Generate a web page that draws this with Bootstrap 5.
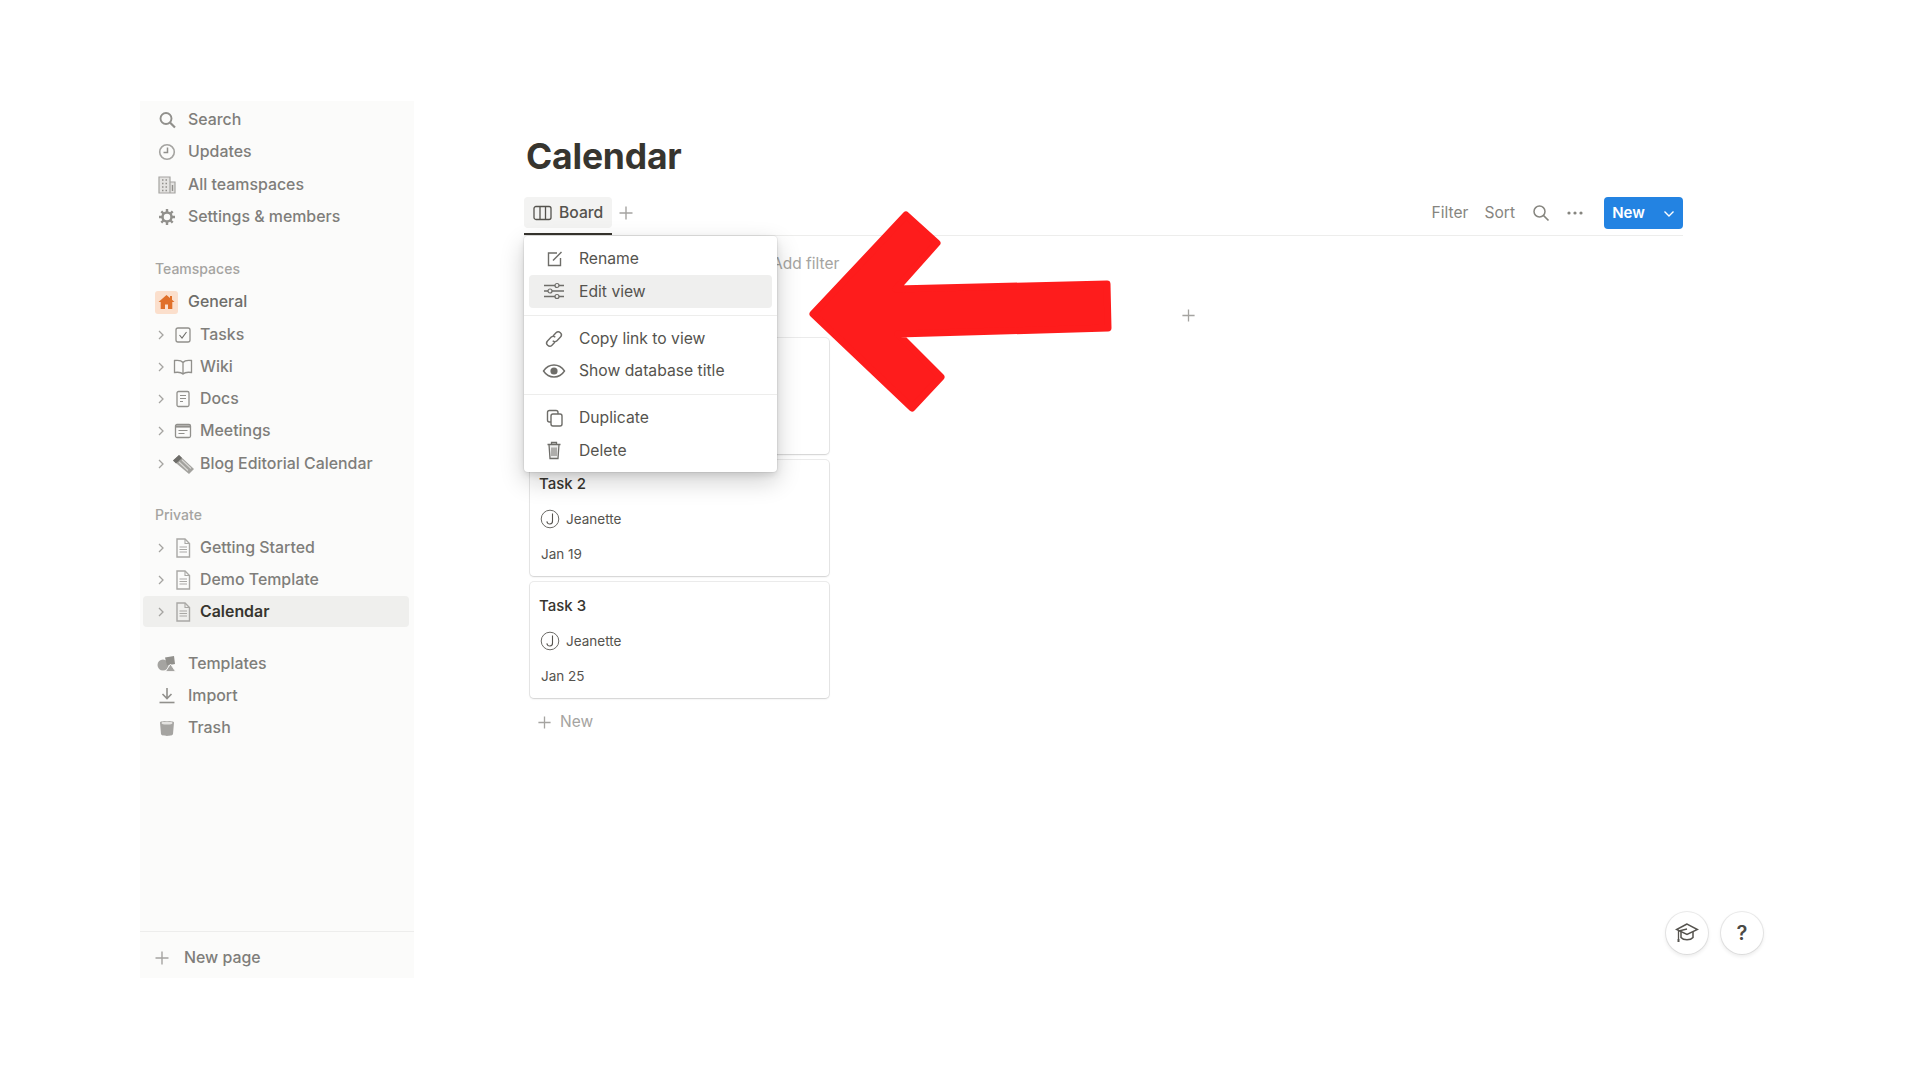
<!doctype html>
<html lang="en">
<head>
  <meta charset="utf-8">
  <title>Calendar</title>
  <link href="https://cdn.jsdelivr.net/npm/bootstrap@5.3.3/dist/css/bootstrap.min.css" rel="stylesheet">
  <style>
    body { background: #fff; font-family: Inter, "Liberation Sans", sans-serif; color: #37352f; overflow: hidden; }
    .app-frame { width: 1543px; height: 877px; margin: 101px 0 0 140px; position: relative; }
    .side-panel { width: 274px; flex: none; background: #fbfbfa; padding-top: 3px; }
    .side-row { height: 32.25px; padding-left: 15px; font-size: 15.9px; font-weight: 500; color: #7f7e7a; white-space: nowrap; }
    .side-row .ico { width: 24px; height: 20px; margin-right: 9px; flex: none; }
    .side-row.sub { padding-left: 15px; }
    .side-row.sub .chev { width: 12px; height: 12px; flex: none; margin-right: 4px; }
    .side-row.sub .ico { width: 24px; margin-right: 5px; margin-left: 0; }
    .side-row.current { margin: 0 5px 0 3px; padding-left: 12px; background: #efefed; border-radius: 4px; color: #37352f; font-weight: 600; height: 31px; }
    .side-head { height: 34px; margin-top: 18.5px; padding-left: 15px; font-size: 14px; font-weight: 500; color: #a5a4a1; display: flex; align-items: center; }
    .home-box { width: 23px; height: 23px; background: #fbdfcc; border-radius: 3px; margin-right: 10px; flex: none; }
    .side-gap { margin-top: 20.5px; }
    .side-foot { margin-top: auto; border-top: 1px solid #ededec; height: 47px; padding: 6px 0 0 14px; font-size: 15.9px; font-weight: 500; color: #7f7e7a; }
    .main-area { padding-left: 110px; }
    .page-title { font-size: 35.5px; line-height: 46px; font-weight: 700; margin: 33px 0 17px 2px; color: #37352f; letter-spacing: -.2px; }
    .view-bar { height: 39px; border-bottom: 1px solid #ededec; align-items: flex-start; }
    .view-tab { width: 88px; height: 31px; background: #f3f3f2; border-radius: 4px; font-size: 15.7px; font-weight: 500; color: #55534e; padding: 1px 0 0 9px; position: relative; }
    .view-tab svg { margin-right: 2px !important; }
    .view-tab::after { content: ""; position: absolute; left: 0; right: 0; top: 36px; height: 2px; background: #37352f; }
    .tab-add { margin: 8px 0 0 6px; }
    .bar-link { font-size: 15.6px; font-weight: 400; color: #86857f; }
    .new-split .btn { background: #2383e2; border: 0; color: #fff; height: 32px; font-size: 15px; font-weight: 600; padding: 0; border-radius: 4px; }
    .new-split .btn:first-child { width: 52px; border-right: 1px solid #1c74cb; padding-right: 2px; }
    .new-split .btn:last-child { width: 28px; }
    .filter-row { height: 28px; margin-top: 14px; padding-left: 248px; font-size: 15.5px; color: #a5a4a1; line-height: 28px; }
    .board-wrap { margin-left: 6px; }
    .col-lane { width: 299px; flex: none; }
    .add-lane { margin: 0 0 0 352px; }
    .task-box { height: 116px; margin-bottom: 6px; border: 0; border-radius: 4px; box-shadow: 0 0 0 1px rgba(15,15,15,.08), 0 1px 2px rgba(15,15,15,.12); padding: 14px 9px 0; }
    .task-name { font-size: 15px; font-weight: 500; line-height: 20px; color: #37352f; }
    .task-who { font-size: 13.5px; color: #55534e; margin-top: 15px; height: 20px; padding-left: 1px; }
    .task-who svg { margin-right: 6px !important; }
    .task-when { font-size: 13.5px; color: #55534e; margin-top: 15px; line-height: 20px; padding-left: 2px; }
    .lane-new { font-size: 15.5px; color: #a5a4a1; margin-top: 12px; padding-left: 7px; height: 24px; }
    .lane-new svg { margin-right: 4px !important; }
    .view-menu { position: absolute; left: 384px; top: 135px; width: 253px; height: 236px; padding: 7px 0 0; border: 0; border-radius: 4px; box-shadow: 0 0 0 1px rgba(15,15,15,.05), 0 3px 6px rgba(15,15,15,.1), 0 9px 24px rgba(15,15,15,.2); display: block; z-index: 3; }
    .view-menu .dropdown-item { height: 32.25px; padding: 0 0 0 13px; margin: 0 5px; width: auto; font-size: 15.7px; color: #55534e; display: flex; align-items: center; border-radius: 4px; }
    .view-menu .dropdown-item svg { width: 24px; height: 20px; margin-right: 13px; flex: none; }
    .view-menu .dropdown-item.picked { background: #efefee; }
    .view-menu .dropdown-divider { margin: 7px 0; border-color: #ededec; opacity: 1; }
    .red-arrow { position: absolute; left: 0; top: 0; width: 1920px; height: 1080px; z-index: 4; pointer-events: none; }
    .help-dot { position: absolute; top: 912px; width: 42px; height: 42px; background: #fff; border-radius: 50%; box-shadow: 0 0 0 1px rgba(15,15,15,.08), 0 2px 4px rgba(15,15,15,.1); color: #4b4a46; font-size: 20px; font-weight: 600; }
    .help-dot.learn { left: 1666px; }
    .help-dot.ask { left: 1721px; }
  </style>
</head>
<body>
  <svg width="0" height="0" class="position-absolute">
    <symbol id="i-chev" viewBox="0 0 12 12"><path d="M4 2l4 4-4 4" fill="none" stroke="#a5a4a1" stroke-width="1.3"/></symbol>
    <symbol id="i-doc" viewBox="0 0 24 20"><path d="M6 1h8l4.500 4.500v13.500H6z" fill="none" stroke="#a9a8a5" stroke-width="1.400"/><path d="M14 1v4.500h4.500M8.500 9h7.500M8.500 11.500h7.500M8.500 14h7.500" fill="none" stroke="#a9a8a5" stroke-width="1.100"/></symbol>
    <symbol id="i-plus" viewBox="0 0 16 16"><path d="M8 1.500v13M1.500 8h13" fill="none" stroke="#a5a4a1" stroke-width="1.400"/></symbol>
    <symbol id="i-avatar" viewBox="0 0 20 20"><circle cx="10" cy="10" r="8.800" fill="none" stroke="#6b6a66" stroke-width="1"/><path d="M12.500 4.500v7.500a2.800 2.800 0 0 1-5.600 .4" fill="none" stroke="#55534e" stroke-width="1.100"/></symbol>
  </svg>

  <div class="app-frame d-flex">
    <aside class="side-panel d-flex flex-column">
      <div class="side-row d-flex align-items-center"><svg class="ico" viewBox="0 0 24 20"><circle cx="11" cy="8.500" r="5.500" fill="none" stroke="#91908c" stroke-width="1.900"/><path d="M15 12.500l5 5" stroke="#91908c" stroke-width="2.200"/></svg>Search</div>
      <div class="side-row d-flex align-items-center"><svg class="ico" viewBox="0 0 24 20"><circle cx="12" cy="10" r="7.300" fill="none" stroke="#a5a4a1" stroke-width="1.600"/><path d="M12.500 5.500v5H8.500" fill="none" stroke="#91908c" stroke-width="1.500"/></svg>Updates</div>
      <div class="side-row d-flex align-items-center"><svg class="ico" viewBox="0 0 24 20"><path d="M4 2h11v16H4zM15 7h5v11h-5z" fill="#e4e3e1" stroke="#a5a4a1" stroke-width="1.200"/><path d="M7 5h1.500M10.500 5H12M7 8.500h1.500M10.500 8.500H12M7 12h1.500M10.500 12H12M7 15.500h1.500M10.500 15.500H12M17.500 10v6" stroke="#91908c" stroke-width="1.400"/></svg>All teamspaces</div>
      <div class="side-row d-flex align-items-center"><svg class="ico" viewBox="0 0 24 20"><circle cx="12" cy="10" r="4.500" fill="none" stroke="#91908c" stroke-width="2.500"/><path d="M12 2v3M12 15v3M4 10h3M17 10h3M6.300 4.300l2.200 2.200M15.500 13.500l2.200 2.200M17.700 4.300l-2.200 2.200M8.500 13.500l-2.200 2.200" stroke="#91908c" stroke-width="2.400"/></svg>Settings &amp; members</div>

      <div class="side-head">Teamspaces</div>
      <div class="side-row d-flex align-items-center" style="height:33px"><span class="home-box d-flex align-items-center justify-content-center"><svg width="17" height="16" viewBox="0 0 17 16"><path d="M8.500 1L0.500 8h2.200v7h4.300v-4.500h3V15h4.300V8h2.200l-2.500-2.200V2h-2v2z" fill="#e0702a"/></svg></span><span style="color:#6e6d69">General</span></div>
      <div class="side-row sub d-flex align-items-center"><svg class="chev"><use href="#i-chev"/></svg><svg class="ico" viewBox="0 0 24 20"><rect x="5" y="3" width="14" height="14" rx="2" fill="none" stroke="#91908c" stroke-width="1.300"/><path d="M8.500 10l2.500 3 4.500-6" fill="none" stroke="#6e6d69" stroke-width="1.100"/></svg>Tasks</div>
      <div class="side-row sub d-flex align-items-center"><svg class="chev"><use href="#i-chev"/></svg><svg class="ico" viewBox="0 0 24 20"><path d="M12 5.500C10.500 3.500 7 3 3.500 3.500v12c3.500-.5 7 0 8.500 1.500 1.500-1.500 5-2 8.500-1.500v-12C17 3 13.500 3.500 12 5.500zm0 0V17" fill="none" stroke="#91908c" stroke-width="1.300"/></svg>Wiki</div>
      <div class="side-row sub d-flex align-items-center"><svg class="chev"><use href="#i-chev"/></svg><svg class="ico" viewBox="0 0 24 20"><rect x="6" y="2.500" width="12" height="15" rx="1.500" fill="none" stroke="#91908c" stroke-width="1.300"/><path d="M9 6.500h6M9 9.500h6M9 12.500h3" stroke="#91908c" stroke-width="1.100"/></svg>Docs</div>
      <div class="side-row sub d-flex align-items-center"><svg class="chev"><use href="#i-chev"/></svg><svg class="ico" viewBox="0 0 24 20"><rect x="4.500" y="3.500" width="15" height="13" rx="1.500" fill="none" stroke="#91908c" stroke-width="1.300"/><path d="M4.500 5.500h15" stroke="#91908c" stroke-width="2.200"/><path d="M7.500 9.500h9M7.500 12.500h6" stroke="#91908c" stroke-width="1.100"/></svg>Meetings</div>
      <div class="side-row sub d-flex align-items-center"><svg class="chev"><use href="#i-chev"/></svg><svg class="ico" viewBox="0 0 24 20"><path d="M2 6.500L8 1l15 14-5 5z" fill="#a3a29e"/><path d="M2 6.500L8 1l3 3-6 5.500z" fill="#6e6d69"/><path d="M8 8l9 8.500M11 6l9 8.500" stroke="#d9d8d5" stroke-width="1.100"/></svg>Blog Editorial Calendar</div>

      <div class="side-head private-head" style="margin-top:18px">Private</div>
      <div class="side-row sub d-flex align-items-center"><svg class="chev"><use href="#i-chev"/></svg><svg class="ico"><use href="#i-doc"/></svg>Getting Started</div>
      <div class="side-row sub d-flex align-items-center"><svg class="chev"><use href="#i-chev"/></svg><svg class="ico"><use href="#i-doc"/></svg>Demo Template</div>
      <div class="side-row sub current d-flex align-items-center"><svg class="chev"><use href="#i-chev"/></svg><svg class="ico"><use href="#i-doc"/></svg>Calendar</div>

      <div class="side-row side-gap d-flex align-items-center"><svg class="ico" viewBox="0 0 24 20"><circle cx="8" cy="11" r="5.500" fill="#a5a4a1"/><path d="M10 3.500l9-1.500 1 8-8 1.500z" fill="#91908c"/><path d="M15.500 10l5 7.500h-10z" fill="#a5a4a1" stroke="#fbfbfa" stroke-width=".8"/></svg>Templates</div>
      <div class="side-row d-flex align-items-center"><svg class="ico" viewBox="0 0 24 20"><path d="M12 2v10M7.500 8l4.500 4.500L16.500 8" fill="none" stroke="#91908c" stroke-width="1.600"/><path d="M4.500 16.500h15" stroke="#91908c" stroke-width="1.600"/></svg>Import</div>
      <div class="side-row d-flex align-items-center"><svg class="ico" viewBox="0 0 24 20"><path d="M5 4.500C5 2.500 19 2.500 19 4.500L18 16c-.2 2.500-11.800 2.500-12 0z" fill="#a5a4a1"/><ellipse cx="12" cy="5" rx="5.500" ry="1.500" fill="#e4e3e1"/></svg>Trash</div>

      <div class="side-foot d-flex align-items-center"><svg width="16" height="16" class="me-2"><use href="#i-plus"/></svg><span style="margin-left:6px">New page</span></div>
    </aside>

    <main class="main-area flex-grow-1">
      <h1 class="page-title">Calendar</h1>
      <div class="view-bar d-flex">
        <div class="view-tab d-flex align-items-center"><svg width="20" height="16" viewBox="0 0 20 16" class="me-1"><rect x="1" y="1.500" width="17" height="13" rx="2" fill="none" stroke="#55534e" stroke-width="1.300"/><path d="M7 1.500v13M12.500 1.500v13" stroke="#55534e" stroke-width="1.300"/></svg><span class="ms-1">Board</span></div>
        <svg class="tab-add" width="16" height="16"><use href="#i-plus"/></svg>
        <div class="ms-auto d-flex align-items-center" style="height:32px">
          <span class="bar-link" style="margin-right:16px">Filter</span>
          <span class="bar-link" style="margin-right:17px">Sort</span>
          <svg width="18" height="18" viewBox="0 0 18 18" style="margin-right:17px"><circle cx="7.500" cy="7.500" r="5.500" fill="none" stroke="#86857f" stroke-width="1.500"/><path d="M11.500 11.500l5 5" stroke="#86857f" stroke-width="1.700"/></svg>
          <svg width="16" height="4" viewBox="0 0 16 4" style="margin-right:21px"><circle cx="2" cy="2" r="1.600" fill="#86857f"/><circle cx="8" cy="2" r="1.600" fill="#86857f"/><circle cx="14" cy="2" r="1.600" fill="#86857f"/></svg>
          <div class="btn-group new-split">
            <button type="button" class="btn">New</button>
            <button type="button" class="btn"><svg width="12" height="8" viewBox="0 0 12 8"><path d="M1.500 1.500L6 6l4.500-4.500" fill="none" stroke="#fff" stroke-width="1.400"/></svg></button>
          </div>
        </div>
      </div>
      <div class="filter-row">Add filter</div>
      <div class="board-wrap d-flex">
        <div class="col-lane" style="margin-top:60px">
          <div class="card task-box"></div>
          <div class="card task-box">
            <div class="task-name">Task 2</div>
            <div class="task-who d-flex align-items-center"><svg width="20" height="20" class="me-2"><use href="#i-avatar"/></svg>Jeanette</div>
            <div class="task-when">Jan 19</div>
          </div>
          <div class="card task-box">
            <div class="task-name">Task 3</div>
            <div class="task-who d-flex align-items-center"><svg width="20" height="20" class="me-2"><use href="#i-avatar"/></svg>Jeanette</div>
            <div class="task-when">Jan 25</div>
          </div>
          <div class="lane-new d-flex align-items-center"><svg width="15" height="15" class="me-2"><use href="#i-plus"/></svg><span class="ms-1">New</span></div>
        </div>
        <svg class="add-lane" style="margin-top:30px" width="15" height="15"><use href="#i-plus"/></svg>
      </div>
    </main>

    <div class="dropdown-menu view-menu">
      <a class="dropdown-item" href="#"><svg viewBox="0 0 24 20"><path d="M15 4H6.500v12.500H18.500V9" fill="none" stroke="#6e6d69" stroke-width="1.400"/><path d="M11 11.500L19.500 3" stroke="#6e6d69" stroke-width="1.400"/></svg>Rename</a>
      <a class="dropdown-item picked" href="#"><svg viewBox="0 0 24 20"><path d="M2 4.500h20M2 10h20M2 15.500h20" stroke="#6e6d69" stroke-width="1.300"/><circle cx="15" cy="4.500" r="2" fill="#efefee" stroke="#6e6d69" stroke-width="1.200"/><circle cx="8" cy="10" r="2" fill="#efefee" stroke="#6e6d69" stroke-width="1.200"/><circle cx="15" cy="15.500" r="2" fill="#efefee" stroke="#6e6d69" stroke-width="1.200"/></svg>Edit view</a>
      <hr class="dropdown-divider">
      <a class="dropdown-item" href="#"><svg viewBox="0 0 24 20"><path d="M11 7l3-3.200a3 3 0 0 1 4.500 4.200l-3.500 3.700a3 3 0 0 1-4.300 0" fill="none" stroke="#6e6d69" stroke-width="1.400"/><path d="M13 13l-3 3.200A3 3 0 0 1 5.500 12L9 8.300a3 3 0 0 1 4.300 0" fill="none" stroke="#6e6d69" stroke-width="1.400"/></svg>Copy link to view</a>
      <a class="dropdown-item" href="#"><svg viewBox="0 0 24 20"><path d="M1.500 10C4.500 5.500 8 4 12 4s7.500 1.500 10.500 6C19.500 14.500 16 16 12 16S4.500 14.500 1.500 10z" fill="none" stroke="#6e6d69" stroke-width="1.400"/><circle cx="12" cy="10" r="3.600" fill="#6e6d69"/></svg>Show database title</a>
      <hr class="dropdown-divider">
      <a class="dropdown-item" href="#"><svg viewBox="0 0 24 20"><rect x="9" y="6" width="11" height="12" rx="2" fill="none" stroke="#6e6d69" stroke-width="1.400"/><path d="M9 14H7.500a2 2 0 0 1-2-2V4.500a2 2 0 0 1 2-2H14a2 2 0 0 1 2 2V6" fill="none" stroke="#6e6d69" stroke-width="1.400"/></svg>Duplicate</a>
      <a class="dropdown-item" href="#"><svg viewBox="0 0 24 20"><path d="M5.500 4.500h13M9.500 4.500V2.500h5v2M7 4.500l1 14h8l1-14" fill="#eeeeed" stroke="#6e6d69" stroke-width="1.300"/><path d="M10 7.500v8.500M12 7.500v8.500M14 7.500v8.500" stroke="#6e6d69" stroke-width="1"/></svg>Delete</a>
    </div>
  </div>

  <svg class="red-arrow" viewBox="0 0 1920 1080"><path d="M813 314L906 215 937 243 896 289 1107 284 1108 328 898 334 941 377 912 408z" fill="#fe1c1c" stroke="#fe1c1c" stroke-width="7" stroke-linejoin="round"/></svg>

  <div class="help-dot learn d-flex align-items-center justify-content-center"><svg width="24" height="22" viewBox="0 0 24 22"><path d="M12 2L1.500 7.500 12 12.500l10.500-5z" fill="none" stroke="#55534e" stroke-width="1.500"/><path d="M6 10v5.500c2.500 3 9.500 3 12 0V10" fill="none" stroke="#55534e" stroke-width="1.500"/><path d="M12 7l-8.500 2v8" fill="none" stroke="#55534e" stroke-width="1.300"/><path d="M3.500 17v3" stroke="#55534e" stroke-width="2"/></svg></div>
  <div class="help-dot ask d-flex align-items-center justify-content-center">?</div>

  <script src="https://cdn.jsdelivr.net/npm/bootstrap@5.3.3/dist/js/bootstrap.bundle.min.js"></script>
</body>
</html>
